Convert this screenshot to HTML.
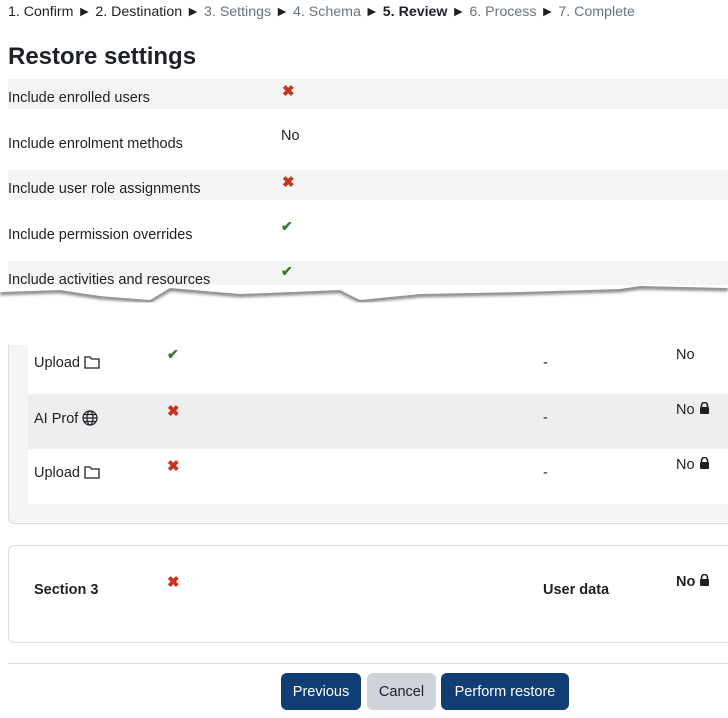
<!DOCTYPE html>
<html><head><style>
body{margin:0;width:728px;height:718px;overflow:hidden;background:#fff;font-family:"Liberation Sans",sans-serif;color:#1d2125;font-size:14.5px;position:relative}
.a{position:absolute;white-space:nowrap}
.g{color:#6a737b}
.x{color:#ca3120;font-weight:bold;font-size:15px}
.c{color:#357a32;font-weight:bold;font-size:14px}
.btn{position:absolute;top:673px;height:37px;border-radius:6px;color:#fff;background:#0f3d74;font-size:14.5px;line-height:37px;text-align:center}
</style></head><body>
<div class="a" style="left:8px;top:4px;font-size:14.2px">1. Confirm ► 2. Destination ► <span class="g">3. Settings</span> ► <span class="g">4. Schema</span> ► <b>5. Review</b> ► <span class="g">6. Process</span> ► <span class="g">7. Complete</span></div>
<div class="a" style="left:8px;top:43px;font-size:24px;font-weight:bold">Restore settings</div>
<div class="a" style="left:8px;top:79px;width:720px;height:30px;background:#f5f5f5"></div>
<div class="a" style="left:8px;top:170px;width:720px;height:30px;background:#f5f5f5"></div>
<div class="a" style="left:8px;top:261px;width:720px;height:30px;background:#f5f5f5"></div>
<div class="a" style="left:8px;top:90px">Include enrolled users</div>
<div class="a x" style="left:282px;top:82px">✖</div>
<div class="a" style="left:8px;top:136px">Include enrolment methods</div>
<div class="a" style="left:281px;top:128px">No</div>
<div class="a" style="left:8px;top:181px">Include user role assignments</div>
<div class="a x" style="left:282px;top:173px">✖</div>
<div class="a" style="left:8px;top:227px">Include permission overrides</div>
<div class="a c" style="left:281px;top:218px">✔</div>
<div class="a" style="left:8px;top:272px">Include activities and resources</div>
<div class="a c" style="left:281px;top:263px">✔</div>
<svg class="a" style="left:0;top:285px" width="728" height="30"><defs><filter id="b"><feGaussianBlur stdDeviation="1.5"/></filter></defs><path d="M0 8 L60 6 L100 12 L150 16 L170 4 L240 10 L340 6 L360 16 L420 10 L520 8 L620 5 L640 2 L728 4" stroke="#777" stroke-width="4" fill="none" filter="url(#b)"/><path d="M0 7 L60 5 L100 11 L150 15 L170 3 L240 9 L340 5 L360 15 L420 9 L520 7 L620 4 L640 1 L728 3 L728 0 L0 0Z" fill="#fff"/></svg>
<div class="a" style="left:8px;top:345px;width:730px;height:178px;background:#f5f5f5;border:1px solid #ddd;border-top:none;border-radius:0 0 0 6px"></div>
<div class="a" style="left:28px;top:345px;width:700px;height:159px;background:#fff"></div>
<div class="a" style="left:28px;top:394px;width:700px;height:55px;background:#eee"></div>
<div class="a" style="left:34px;top:355px">Upload <svg width="16" height="14" viewBox="0 0 16 14" style="vertical-align:-2px"><path d="M1 2h5l1.5 2H15v9H1z" fill="none" stroke="#1d2125" stroke-width="1.3"/></svg></div>
<div class="a c" style="left:167px;top:346px">✔</div>
<div class="a" style="left:543px;top:355px">-</div>
<div class="a" style="left:676px;top:347px">No</div>
<div class="a" style="left:34px;top:410px">AI Prof <svg width="16" height="16" viewBox="0 0 16 16" style="vertical-align:-3px" fill="none" stroke="#1d2125" stroke-width="1.2"><circle cx="8" cy="8" r="7"/><ellipse cx="8" cy="8" rx="3" ry="7"/><path d="M1 8h14M2 4.5h12M2 11.5h12"/></svg></div>
<div class="a x" style="left:167px;top:402px">✖</div>
<div class="a" style="left:543px;top:410px">-</div>
<div class="a" style="left:676px;top:402px">No <svg width="11" height="12" viewBox="0 0 11 12"><path d="M2.5 5V3.5a3 3 0 016 0V5" stroke="#1d2125" stroke-width="1.6" fill="none"/><rect x="1" y="5" width="9" height="7" rx="1" fill="#1d2125"/></svg></div>
<div class="a" style="left:34px;top:465px">Upload <svg width="16" height="14" viewBox="0 0 16 14" style="vertical-align:-2px"><path d="M1 2h5l1.5 2H15v9H1z" fill="none" stroke="#1d2125" stroke-width="1.3"/></svg></div>
<div class="a x" style="left:167px;top:457px">✖</div>
<div class="a" style="left:543px;top:465px">-</div>
<div class="a" style="left:676px;top:457px">No <svg width="11" height="12" viewBox="0 0 11 12"><path d="M2.5 5V3.5a3 3 0 016 0V5" stroke="#1d2125" stroke-width="1.6" fill="none"/><rect x="1" y="5" width="9" height="7" rx="1" fill="#1d2125"/></svg></div>
<div class="a" style="left:8px;top:545px;width:730px;height:96px;border:1px solid #ddd;border-radius:6px"></div>
<div class="a" style="left:34px;top:582px;font-weight:bold">Section 3</div>
<div class="a x" style="left:167px;top:573px">✖</div>
<div class="a" style="left:543px;top:582px;font-weight:bold">User data</div>
<div class="a" style="left:676px;top:574px;font-weight:bold">No <svg width="11" height="12" viewBox="0 0 11 12"><path d="M2.5 5V3.5a3 3 0 016 0V5" stroke="#1d2125" stroke-width="1.6" fill="none"/><rect x="1" y="5" width="9" height="7" rx="1" fill="#1d2125"/></svg></div>
<div class="a" style="left:8px;top:663px;width:720px;height:1px;background:#ddd"></div>
<div class="btn" style="left:281px;width:80px;line-height:38px">Previous</div>
<div class="btn" style="left:367px;width:69px;background:#ced4da;color:#1d2125;line-height:38px">Cancel</div>
<div class="btn" style="left:441px;width:128px;line-height:38px">Perform restore</div>
</body></html>
